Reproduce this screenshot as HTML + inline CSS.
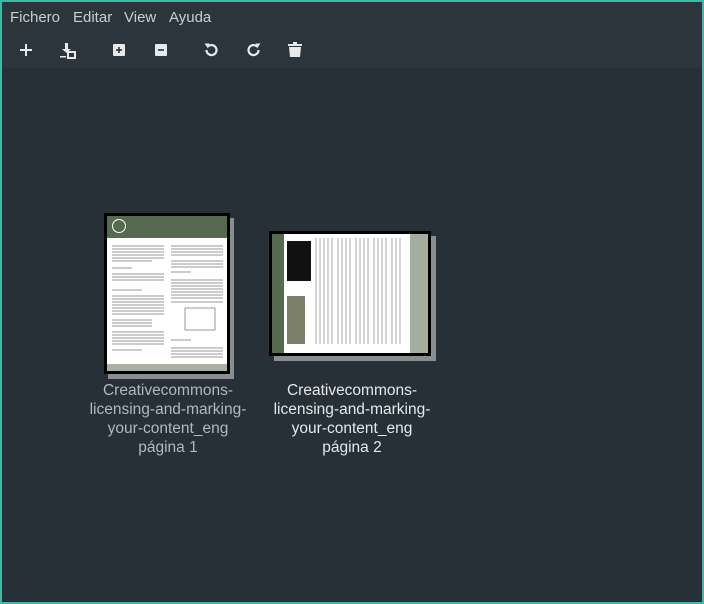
<!DOCTYPE html>
<html><head><style>
html,body{margin:0;padding:0}
body{width:704px;height:604px;background:#263036;position:relative;overflow:hidden;font-family:"Liberation Sans",sans-serif;}
.frame{position:absolute;left:0;top:0;width:700px;height:600px;border:2px solid #3fb8a6;}
.menu{position:absolute;left:2px;top:2px;width:700px;height:30px;background:#2c353b;}
.menu span{position:absolute;top:7px;font-size:15px;color:#c9ced1}
.tool{position:absolute;left:2px;top:32px;width:700px;height:36px;background:#2c353b;}
.ic{position:absolute;}
.thumb{position:absolute;background:#fff;border:3px solid #000;box-sizing:border-box}
.sh{position:absolute;background:#8a8e90}
.lbl{position:absolute;font-size:15.5px;line-height:19px;text-align:center;width:200px}
</style></head><body>
<div class="frame"></div>
<div class="menu">
<span style="left:8px">Fichero</span><span style="left:71px">Editar</span><span style="left:122px">View</span><span style="left:167px">Ayuda</span>
</div>
<div class="tool"></div>
<svg class="ic" style="left:0;top:32px" width="320" height="36" viewBox="0 32 320 36">
<g fill="#e6e8e9">
<rect x="20" y="49" width="12" height="2"/><rect x="25" y="44" width="2" height="12"/>
<rect x="65" y="43" width="3" height="7"/><path d="M62 49h9l-4.5 4z"/><rect x="60" y="56" width="6" height="1.5"/><rect x="67" y="51" width="9" height="8"/>
<rect x="113" y="44" width="12" height="12" rx="1"/>
<rect x="155" y="44" width="12" height="12" rx="1"/>
<rect x="288" y="44" width="14" height="2"/><rect x="293" y="42" width="4" height="2"/><path d="M289 47h12l-1 10h-10z"/>
</g>
<g fill="#2c353b"><rect x="116" y="49.2" width="6" height="1.6"/><rect x="118.2" y="47" width="1.6" height="6"/><rect x="158" y="49.2" width="6" height="1.6"/><rect x="69" y="53" width="5" height="4"/></g>
<g fill="none" stroke="#e6e8e9" stroke-width="2.2">
<path d="M208 46.5a5 5 0 1 1 -1.5 3.5"/><path d="M257 46.5a5 5 0 1 0 1.5 3.5"/>
</g>
<path d="M204.5 43.5l5 0l-1.5 5z" fill="#e6e8e9"/><path d="M260.5 43.5l-5 0l1.5 5z" fill="#e6e8e9"/>
</svg>

<div class="sh" style="left:108px;top:218px;width:126px;height:161px"></div>
<div class="thumb" style="left:104px;top:213px;width:126px;height:161px;overflow:hidden">
<div style="position:absolute;left:0;top:0;width:120px;height:22px;background:#566a4f"></div>
<div style="position:absolute;left:5px;top:3px;width:12px;height:12px;border:1.5px solid #fff;border-radius:50%"></div>
<div style="position:absolute;left:0;top:148px;width:120px;height:10px;background:#a9b0a6"></div>
<svg style="position:absolute;left:0;top:24px" width="120" height="124">
<g stroke="#999" stroke-width="1">
<path d="M5 6h52M5 9h52M5 12h52M5 15h52M5 18h52M5 21h40M5 28h20M5 34h52M5 37h52M5 40h52M5 50h30M5 56h52M5 59h52M5 62h52M5 65h52M5 68h52M5 71h52M5 74h52M5 80h40M5 83h40M5 86h40M5 92h52M5 95h52M5 98h52M5 101h52M5 104h52M5 110h30"/>
<path d="M64 6h52M64 9h52M64 12h52M64 15h52M64 21h52M64 24h52M64 27h52M64 32h20M64 40h52M64 43h52M64 46h52M64 49h52M64 52h52M64 55h52M64 58h52M64 62h52M64 100h20M64 108h52M64 111h52M64 114h52M64 117h52"/>
</g>
<rect x="78" y="68" width="30" height="22" fill="none" stroke="#999"/>
</svg>
</div>

<div class="sh" style="left:274px;top:236px;width:162px;height:125px"></div>
<div class="thumb" style="left:269px;top:231px;width:162px;height:125px;overflow:hidden">
<div style="position:absolute;left:0;top:0;width:12px;height:119px;background:#566a4f"></div>
<div style="position:absolute;left:138px;top:0;width:18px;height:119px;background:#a5ad9f"></div>
<div style="position:absolute;left:15px;top:7px;width:24px;height:40px;background:#111"></div>
<div style="position:absolute;left:15px;top:62px;width:18px;height:48px;background:#7b7f68"></div>
<svg style="position:absolute;left:40px;top:4px" width="96" height="112">
<g stroke="#aaa" stroke-width="1">
<path d="M4 0v106M8 0v106M12 0v106M16 0v106M20 0v106M26 0v106M30 0v106M34 0v106M38 0v106M44 0v106M48 0v106M52 0v106M56 0v106M62 0v106M66 0v106M70 0v106M74 0v106M80 0v106M84 0v106M88 0v106"/>
</g>
</svg>
</div>

<div class="lbl" style="left:68px;top:381px;color:#b2b8bb">Creativecommons-<br>licensing-and-marking-<br>your-content_eng<br>página 1</div>
<div class="lbl" style="left:252px;top:381px;color:#e6e8e9">Creativecommons-<br>licensing-and-marking-<br>your-content_eng<br>página 2</div>
</body></html>
